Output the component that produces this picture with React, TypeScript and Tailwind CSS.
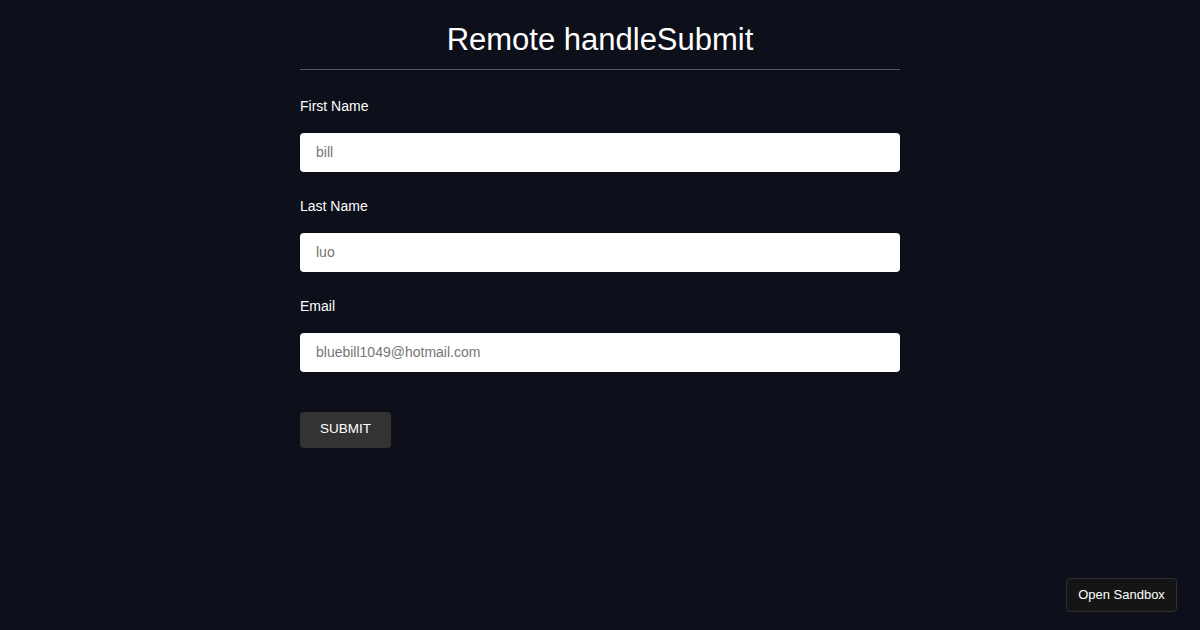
import React from 'react';

const fields = [
  { label: 'First Name', value: 'bill' },
  { label: 'Last Name', value: 'luo' },
  { label: 'Email', value: 'bluebill1049@hotmail.com' },
];

export default function App() {
  return (
    <div
      className="relative min-h-[630px] w-full bg-[#0d0f1a] text-white"
      style={{ fontFamily: '"Liberation Sans", Arial, sans-serif' }}
    >
      <div className="mx-auto w-[600px] pt-[22px]">
        <h1 className="text-center text-[31px] leading-[36px] font-normal">Remote handleSubmit</h1>
        <div className="mt-[11px] h-px bg-[#4e5a78]" />

        <form className="pt-[26px]">
          {fields.map((f) => (
            <div key={f.label} className="mb-[24px]">
              <label className="block text-[14px] leading-[20px]">{f.label}</label>
              <input
                readOnly
                placeholder={f.value}
                className="mt-[17px] block h-[39px] w-full rounded-[4px] bg-white px-[16px] pb-[2px] text-[14px] text-gray-700 placeholder:text-[#757575] outline-none"
              />
            </div>
          ))}
          <button
            type="button"
            className="mt-[16px] h-[36px] w-[91px] rounded-[4px] bg-[#333333] pb-[1px] text-[13.5px] uppercase text-white"
          >
            Submit
          </button>
        </form>
      </div>

      <button
        type="button"
        className="absolute right-[23px] bottom-[18px] h-[34px] w-[111px] rounded-[4px] border border-[#2f2f2f] bg-[#151515] text-[13px] text-white"
      >
        Open Sandbox
      </button>
    </div>
  );
}
